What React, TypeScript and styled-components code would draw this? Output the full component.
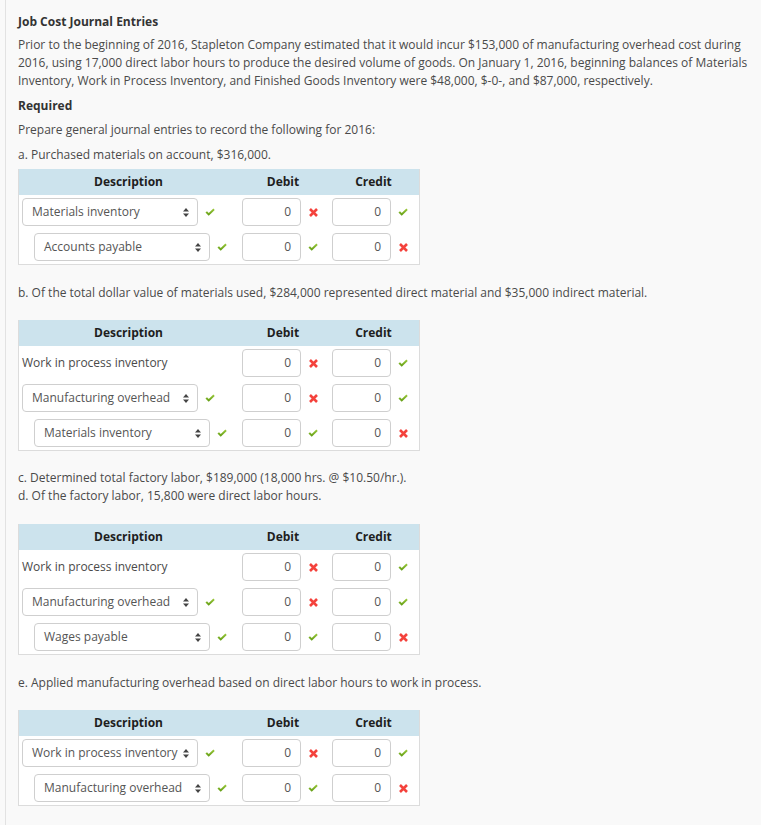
import React from "react";
import styled, { createGlobalStyle } from "styled-components";

const Global = createGlobalStyle`
  html, body { margin: 0; padding: 0; background: #f9f9f9; }
  body { font-family: "Open Sans", "Noto Sans", sans-serif; color: #4a4a4a; }
  * { box-sizing: border-box; }
`;

const Page = styled.div`
  margin-left: 5px;
  border-left: 1px solid #e2e2e2;
  padding: 13px 0 20px 12px;
  min-height: 825px;
  font-size: 12px;
  line-height: 18px;
`;

const Title = styled.div`
  font-weight: 700;
  color: #333;
`;

const Para = styled.p<{ $mt?: number }>`
  margin: ${(p) => p.$mt ?? 6}px 0 0 0;
`;

const Bold = styled.div<{ $mt?: number }>`
  margin-top: ${(p) => p.$mt ?? 6}px;
  font-weight: 700;
  color: #333;
`;

const Table = styled.div<{ $mt: number }>`
  margin-top: ${(p) => p.$mt}px;
  width: 402px;
  border: 1px solid #dcdcdc;
  border-top: none;
  background: #fff;
  display: grid;
  grid-template-columns: 219px 90px 91px;
`;

const Head = styled.div`
  height: 26px;
  background: #cce3ed;
  display: flex;
  align-items: center;
  justify-content: center;
  font-weight: 700;
  color: #1e1e1e;
`;

const Cell = styled.div<{ $last?: boolean }>`
  display: flex;
  align-items: center;
  padding: 3px 0 ${(p) => (p.$last ? 3 : 4)}px 4px;
  height: ${(p) => (p.$last ? 34 : 35)}px;
`;

const DescCell = styled(Cell)<{ $indent?: boolean }>`
  padding-left: ${(p) => (p.$indent ? 15 : 3)}px;
`;

const PlainText = styled.span`
  color: #4a4a4a;
`;

const SelectBox = styled.div`
  width: 176px;
  height: 28px;
  border: 1px solid #cfcfcf;
  border-radius: 4px;
  background: #fff;
  display: flex;
  align-items: center;
  justify-content: space-between;
  padding: 0 8px 0 9px;
  color: #555;
  white-space: nowrap;
`;

const NumBox = styled.div`
  width: 59px;
  height: 28px;
  border: 1px solid #cfcfcf;
  border-radius: 4px;
  background: #fff;
  display: flex;
  align-items: center;
  justify-content: flex-end;
  padding-right: 9px;
  color: #555;
`;

const Mark = styled.span`
  margin-left: 7px;
  width: 10px;
  display: inline-flex;
  align-items: center;
  justify-content: center;
`;

const Arrows = () => (
  <svg width="6" height="9" viewBox="0 0 6 9">
    <path d="M3 0 L6 3.5 H0 Z" fill="#444" />
    <path d="M3 9 L6 5.5 H0 Z" fill="#444" />
  </svg>
);

const Check = () => (
  <svg width="11" height="9" viewBox="0 0 11 9">
    <defs>
      <linearGradient id="gck" x1="0" y1="0" x2="0" y2="1">
        <stop offset="0" stopColor="#9bc93a" />
        <stop offset="1" stopColor="#5e9a12" />
      </linearGradient>
    </defs>
    <path d="M0.5 4.6 L2.2 3.1 L4.1 5 L9.2 0.2 L10.7 1.7 L4.1 8.2 Z" fill="url(#gck)" />
  </svg>
);

const Cross = () => (
  <svg width="9" height="9" viewBox="0 0 9 9">
    <path d="M1 1 L8 8 M8 1 L1 8" stroke="#f4423c" strokeWidth="2.6" strokeLinecap="butt" />
  </svg>
);

type Ok = boolean;
type Row = {
  desc: string;
  select: boolean;
  indent?: boolean;
  descOk?: Ok;
  debitOk: Ok;
  creditOk: Ok;
};

const Icon = ({ ok }: { ok: Ok }) => <Mark>{ok ? <Check /> : <Cross />}</Mark>;

const Journal = ({ rows, mt }: { rows: Row[]; mt: number }) => (
  <Table $mt={mt}>
    <Head>Description</Head>
    <Head>Debit</Head>
    <Head>Credit</Head>
    {rows.map((r, i) => {
      const last = i === rows.length - 1;
      return (
        <React.Fragment key={i}>
          <DescCell $indent={r.indent} $last={last}>
            {r.select ? (
              <>
                <SelectBox>
                  <span>{r.desc}</span>
                  <Arrows />
                </SelectBox>
                <Icon ok={r.descOk ?? true} />
              </>
            ) : (
              <PlainText>{r.desc}</PlainText>
            )}
          </DescCell>
          <Cell $last={last}>
            <NumBox>0</NumBox>
            <Icon ok={r.debitOk} />
          </Cell>
          <Cell $last={last}>
            <NumBox>0</NumBox>
            <Icon ok={r.creditOk} />
          </Cell>
        </React.Fragment>
      );
    })}
  </Table>
);

export default function App() {
  return (
    <Page>
      <Global />
      <Title>Job Cost Journal Entries</Title>
      <Para $mt={5}>
        Prior to the beginning of 2016, Stapleton Company estimated that it would incur $153,000 of manufacturing
        overhead cost during 2016, using 17,000 direct labor hours to produce the desired volume of goods. On January
        1, 2016, beginning balances of Materials Inventory, Work in Process Inventory, and Finished Goods Inventory
        were $48,000, $-0-, and $87,000, respectively.
      </Para>
      <Bold $mt={7}>Required</Bold>
      <Para>Prepare general journal entries to record the following for 2016:</Para>
      <Para $mt={7}>a. Purchased materials on account, $316,000.</Para>
      <Journal
        mt={5}
        rows={[
          { desc: "Materials inventory", select: true, debitOk: false, creditOk: true },
          { desc: "Accounts payable", select: true, indent: true, debitOk: true, creditOk: false },
        ]}
      />
      <Para $mt={19}>
        b. Of the total dollar value of materials used, $284,000 represented direct material and $35,000 indirect
        material.
      </Para>
      <Journal
        mt={18}
        rows={[
          { desc: "Work in process inventory", select: false, debitOk: false, creditOk: true },
          { desc: "Manufacturing overhead", select: true, debitOk: false, creditOk: true },
          { desc: "Materials inventory", select: true, indent: true, debitOk: true, creditOk: false },
        ]}
      />
      <Para $mt={18}>c. Determined total factory labor, $189,000 (18,000 hrs. @ $10.50/hr.).</Para>
      <Para $mt={0}>d. Of the factory labor, 15,800 were direct labor hours.</Para>
      <Journal
        mt={19}
        rows={[
          { desc: "Work in process inventory", select: false, debitOk: false, creditOk: true },
          { desc: "Manufacturing overhead", select: true, debitOk: false, creditOk: true },
          { desc: "Wages payable", select: true, indent: true, debitOk: true, creditOk: false },
        ]}
      />
      <Para $mt={19}>e. Applied manufacturing overhead based on direct labor hours to work in process.</Para>
      <Journal
        mt={18}
        rows={[
          { desc: "Work in process inventory", select: true, debitOk: false, creditOk: true },
          { desc: "Manufacturing overhead", select: true, indent: true, debitOk: true, creditOk: false },
        ]}
      />
    </Page>
  );
}
